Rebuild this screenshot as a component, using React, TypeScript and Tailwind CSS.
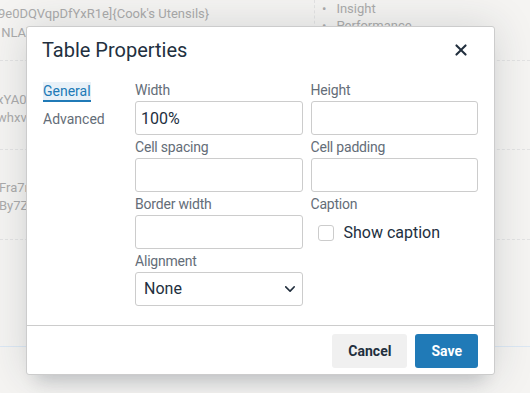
import React from 'react';

const labelCls = "block text-[14px] leading-[18px] pt-[3px] mb-[2px] tracking-[-0.2px] text-[#646d78]";
const inputCls = "block w-full h-[34px] rounded-[3px] border border-[#cccccc] bg-white px-[5px] text-[16px] text-[#222f3e] outline-none";

const Field = ({ label, value = '' }: { label: string; value?: string }) => (
  <div>
    <label className={labelCls}>{label}</label>
    <input className={inputCls} defaultValue={value} />
  </div>
);

const App = () => {
  return (
    <div className="relative w-[530px] h-[393px] overflow-hidden bg-[#f5f4f2] font-['Roboto',sans-serif] text-[13px] text-[#ababab]">
      {/* page behind the dialog */}
      <div className="flex flex-col">
        <div className="flex h-[61px] border-b border-dashed border-[#e3e3e3]">
          <div className="w-[316px] -ml-[2px] pt-[4px] leading-[19px] whitespace-nowrap overflow-hidden">
            <div>9e0DQVqpDfYxR1e]{"{Cook's Utensils}"}</div>
            <div>&nbsp;NLAk2pQ</div>
          </div>
          <div className="flex-1 border-l border-dashed border-[#e3e3e3] leading-[17px]">
            <ul className="pl-[7px]">
              <li className="flex gap-[10px]"><span>•</span><span>Insight</span></li>
              <li className="flex gap-[10px]"><span>•</span><span>Performance</span></li>
            </ul>
          </div>
        </div>
        <div className="flex h-[89px] border-b border-dashed border-[#e3e3e3]">
          <div className="w-[316px] -ml-[3px] pt-[30px] leading-[18px] whitespace-nowrap overflow-hidden">
            <div>xYA0rTq</div>
            <div>whxvLm</div>
          </div>
          <div className="flex-1 border-l border-dashed border-[#e3e3e3]" />
        </div>
        <div className="flex h-[90px] border-b border-dashed border-[#e3e3e3]">
          <div className="w-[316px] -ml-[1px] pt-[29px] leading-[18px] whitespace-nowrap overflow-hidden">
            <div>Fra7rWc</div>
            <div>By7ZpQ</div>
          </div>
          <div className="flex-1 border-l border-dashed border-[#e3e3e3]" />
        </div>
        <div className="flex h-[107px] border-b border-[#dce8f4]">
          <div className="w-[316px]" />
          <div className="flex-1 border-l border-dashed border-[#e3e3e3]" />
        </div>
      </div>

      {/* modal overlay */}
      <div className="absolute inset-0 pl-[26px] pt-[26px]">
        <div className="flex flex-col w-[469px] h-[349px] rounded-[3px] border border-[#cccccc] bg-white shadow-[0_16px_16px_-10px_rgba(34,47,62,0.18),0_0_40px_1px_rgba(34,47,62,0.15)]">
          <div className="flex items-center justify-between pl-[15px] pr-4 pt-[6px]">
            <h1 className="text-[20px] leading-[26px] text-[#222f3e]">Table Properties</h1>
            <button className="flex h-[34px] w-[34px] items-center justify-center text-[#222f3e]">
              <svg width="24" height="24" viewBox="0 0 24 24" fill="currentColor">
                <path d="M17.3 8.2L13.4 12l3.9 3.8a1 1 0 01-1.5 1.5L12 13.4l-3.8 3.9a1 1 0 01-1.5-1.5l3.9-3.8-3.9-3.8a1 1 0 011.5-1.5l3.8 3.9 3.8-3.9a1 1 0 011.5 1.5z" />
              </svg>
            </button>
          </div>

          <div className="flex flex-1 pl-4 pr-4 pt-[11px]">
            <nav className="w-[92px] shrink-0 pt-[4px] flex flex-col items-start text-[14px] leading-[18px]">
              <span className="border-b-2 border-[#207ab7] bg-[#207ab7]/10 text-[#207ab7]">General</span>
              <span className="mt-[8px] border-b-2 border-transparent text-[#646d78]">Advanced</span>
            </nav>
            <div className="grid w-[344px] grid-cols-2 gap-x-2 content-start">
              <Field label="Width" value="100%" />
              <Field label="Height" />
              <Field label="Cell spacing" />
              <Field label="Cell padding" />
              <Field label="Border width" />
              <div>
                <label className={labelCls}>Caption</label>
                <div className="flex h-[34px] items-center gap-[10px] pl-[7px] pt-[2px]">
                  <span className="h-4 w-4 rounded-[3px] border border-[#cccccc] bg-white" />
                  <span className="text-[16px] text-[#222f3e]">Show caption</span>
                </div>
              </div>
              <div>
                <label className={labelCls}>Alignment</label>
                <div className="relative">
                  <div className="flex h-[34px] items-center rounded-[3px] border border-[#cccccc] bg-white pl-[8px] text-[16px] text-[#222f3e]">None</div>
                  <svg className="absolute right-[8px] top-[12px] text-[#222f3e]" width="10" height="10" viewBox="0 0 10 10" fill="currentColor">
                    <path d="M8.7 2.2c.3-.3.8-.3 1 0 .4.4.4.9 0 1.2L5.7 7.8c-.3.3-.9.3-1.2 0L.2 3.4a.8.8 0 010-1.2c.3-.3.8-.3 1.1 0L5 6l3.7-3.8z" />
                  </svg>
                </div>
              </div>
            </div>
          </div>

          <div className="flex justify-end gap-2 border-t border-[#cccccc] px-4 pt-2 pb-[6px]">
            <button className="h-[34px] rounded-[3px] bg-[#f0f0f0] px-4 text-[14px] font-bold text-[#222f3e]">Cancel</button>
            <button className="h-[34px] rounded-[3px] bg-[#207ab7] px-4 text-[14px] font-bold text-white">Save</button>
          </div>
        </div>
      </div>
    </div>
  );
};

export default App;
